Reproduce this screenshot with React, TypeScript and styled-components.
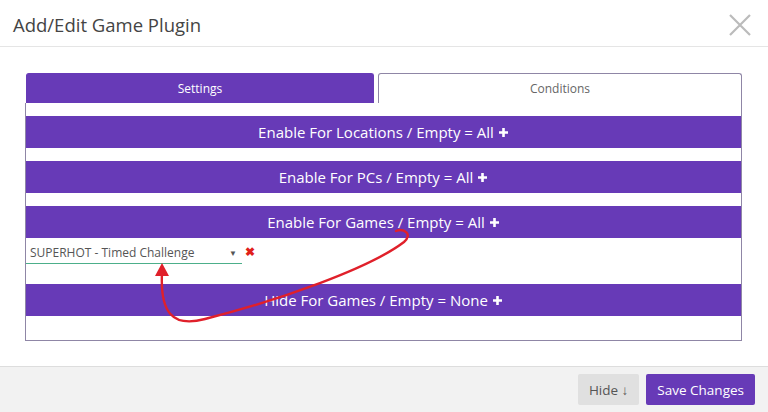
import React from "react";
import styled, { createGlobalStyle } from "styled-components";

const purple = "#673ab7";

const GlobalStyle = createGlobalStyle`
  html, body {
    margin: 0;
    padding: 0;
    background: #fff;
    font-family: "Open Sans", "Liberation Sans", sans-serif;
  }
`;

const Modal = styled.div`
  position: relative;
  width: 768px;
  height: 412px;
  overflow: hidden;
  display: flex;
  flex-direction: column;
`;

const Header = styled.div`
  flex: 0 0 auto;
  height: 46px;
  display: flex;
  align-items: center;
  justify-content: space-between;
  padding: 0 13px;
  border-bottom: 1px solid #e5e5e5;
`;

const Title = styled.h4`
  margin: 2px 0 0 0;
  font-size: 18.5px;
  font-weight: 400;
  color: #444;
`;

const Close = styled.svg`
  width: 22px;
  height: 22px;
  margin-right: 4px;
  margin-top: 4px;
`;

const Body = styled.div`
  flex: 0 0 auto;
  padding: 26px 26px 25px 25px;
`;

const Tabs = styled.div`
  display: flex;
  gap: 4px;
  padding-left: 1px;
`;

const Tab = styled.div<{ $active?: boolean }>`
  flex: ${(p) => (p.$active ? "0 0 348px" : "1")};
  height: 30px;
  box-sizing: border-box;
  display: flex;
  align-items: center;
  justify-content: center;
  font-size: 12px;
  border-radius: 3px 3px 0 0;
  background: ${(p) => (p.$active ? purple : "#fff")};
  color: ${(p) => (p.$active ? "#fff" : "#666")};
  border: 1px solid ${(p) => (p.$active ? purple : "#8f86a6")};
  border-bottom: none;
`;

const Content = styled.div`
  height: 238px;
  box-sizing: border-box;
  border: 1px solid #8f86a6;
  border-top: none;
  padding-top: 13px;
`;

const Bar = styled.div`
  height: 32px;
  background: ${purple};
  color: #fff;
  display: flex;
  align-items: center;
  justify-content: center;
  gap: 4px;
  font-size: 15px;
  margin-bottom: 13px;
`;

const BarWithRow = styled(Bar)`
  margin-bottom: 0;
`;

const SelectRow = styled.div`
  height: 46px;
  display: flex;
  align-items: flex-start;
  gap: 3px;
`;

const Select = styled.div`
  width: 216px;
  height: 26px;
  box-sizing: border-box;
  border-bottom: 1px solid #4caf8a;
  display: flex;
  align-items: center;
  justify-content: space-between;
  padding: 3px 4px 0 4px;
  font-size: 12px;
  color: #555;
`;

const Caret = styled.span`
  font-size: 8px;
  color: #555;
  margin-right: 1px;
`;

const Remove = styled.span`
  margin-top: 8px;
  font-size: 12px;
  font-weight: 700;
  color: #e0201a;
  line-height: 1;
`;

const Footer = styled.div`
  flex: 0 0 auto;
  margin-top: auto;
  height: 46px;
  box-sizing: border-box;
  border-top: 1px solid #ddd;
  background: #f2f2f2;
  display: flex;
  justify-content: flex-end;
  align-items: flex-start;
  gap: 7px;
  padding: 7px 13px 0 0;
`;

const Button = styled.button<{ $primary?: boolean }>`
  height: 31px;
  border: none;
  border-radius: 2px;
  padding: 0 11px;
  font-family: inherit;
  font-size: 13.5px;
  background: ${(p) => (p.$primary ? purple : "#e0e0e0")};
  color: ${(p) => (p.$primary ? "#fff" : "#555")};
`;

const Annotation = styled.svg`
  position: absolute;
  left: 0;
  top: 0;
  pointer-events: none;
`;

const Plus = () => (
  <svg width="11" height="11" viewBox="0 0 11 11">
    <path d="M5.5 1v9M1 5.5h9" stroke="#fff" strokeWidth="2.6" />
  </svg>
);

const bars = [
  "Enable For Locations / Empty = All",
  "Enable For PCs / Empty = All",
];

export default function App() {
  return (
    <Modal>
      <GlobalStyle />
      <Header>
        <Title>Add/Edit Game Plugin</Title>
        <Close viewBox="0 0 22 22">
          <path d="M1 1l20 20M21 1L1 21" stroke="#bbb" strokeWidth="2.2" />
        </Close>
      </Header>
      <Body>
        <Tabs>
          <Tab $active>Settings</Tab>
          <Tab>Conditions</Tab>
        </Tabs>
        <Content>
          {bars.map((b) => (
            <Bar key={b}>
              {b} <Plus />
            </Bar>
          ))}
          <BarWithRow>
            Enable For Games / Empty = All <Plus />
          </BarWithRow>
          <SelectRow>
            <Select>
              SUPERHOT - Timed Challenge
              <Caret>▼</Caret>
            </Select>
            <Remove>✖</Remove>
          </SelectRow>
          <Bar>
            Hide For Games / Empty = None <Plus />
          </Bar>
        </Content>
      </Body>
      <Footer>
        <Button>Hide ↓</Button>
        <Button $primary>Save Changes</Button>
      </Footer>
      <Annotation width="768" height="412">
        <path
          d="M396 231 C404 228, 413 234, 404 242 C370 268, 280 300, 205 319 C172 328, 160 312, 162 273"
          fill="none"
          stroke="#e0202a"
          strokeWidth="2.4"
          strokeLinecap="round"
        />
        <polygon points="162,263 155,276 169,276" fill="#e0202a" />
      </Annotation>
    </Modal>
  );
}
